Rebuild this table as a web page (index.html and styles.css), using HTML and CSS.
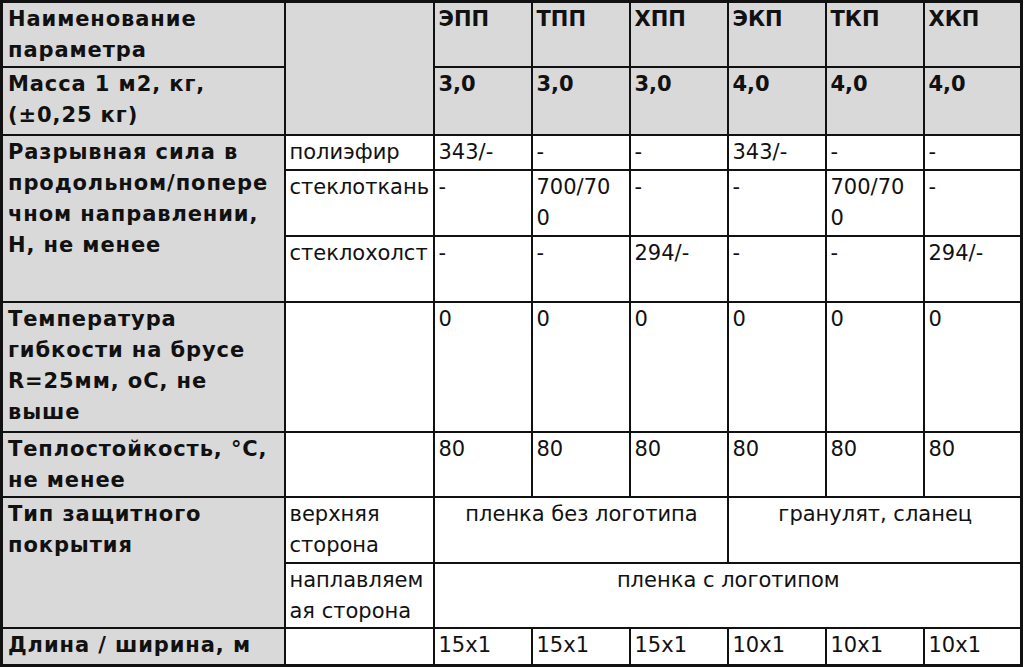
FILE: index.html
```html
<!DOCTYPE html>
<html lang="ru">
<head>
<meta charset="utf-8">
<link rel="stylesheet" href="styles.css">
</head>
<body>
<table class="spec">
  <colgroup>
    <col class="c-name">
    <col class="c-sub">
    <col class="c-val"><col class="c-val"><col class="c-val">
    <col class="c-val"><col class="c-val"><col class="c-val">
  </colgroup>
  <tbody>
    <tr class="r-head">
      <td class="name">Наименование параметра</td>
      <td class="gray" rowspan="2"></td>
      <td class="gray bold">ЭПП</td>
      <td class="gray bold">ТПП</td>
      <td class="gray bold">ХПП</td>
      <td class="gray bold">ЭКП</td>
      <td class="gray bold">ТКП</td>
      <td class="gray bold">ХКП</td>
    </tr>
    <tr class="r-mass">
      <td class="name">Масса 1 м2, кг, (±0,25 кг)</td>
      <td class="gray bold">3,0</td>
      <td class="gray bold">3,0</td>
      <td class="gray bold">3,0</td>
      <td class="gray bold">4,0</td>
      <td class="gray bold">4,0</td>
      <td class="gray bold">4,0</td>
    </tr>
    <tr class="r-poly">
      <td class="name" rowspan="3">Разрывная сила в продольном/&#8288;поперечном направлении, Н, не менее</td>
      <td>полиэфир</td>
      <td>343/-</td><td>-</td><td>-</td><td>343/-</td><td>-</td><td>-</td>
    </tr>
    <tr class="r-glass">
      <td>стеклоткань</td>
      <td>-</td><td>700/70<br>0</td><td>-</td><td>-</td><td>700/70<br>0</td><td>-</td>
    </tr>
    <tr class="r-holst">
      <td>стеклохолст</td>
      <td>-</td><td>-</td><td>294/-</td><td>-</td><td>-</td><td>294/-</td>
    </tr>
    <tr class="r-temp">
      <td class="name">Температура гибкости на брусе R=25мм, оС, не выше</td>
      <td></td>
      <td>0</td><td>0</td><td>0</td><td>0</td><td>0</td><td>0</td>
    </tr>
    <tr class="r-heat">
      <td class="name">Теплостойкость, °С, не менее</td>
      <td></td>
      <td>80</td><td>80</td><td>80</td><td>80</td><td>80</td><td>80</td>
    </tr>
    <tr class="r-top">
      <td class="name" rowspan="2">Тип защитного покрытия</td>
      <td>верхняя сторона</td>
      <td class="center" colspan="3">пленка без логотипа</td>
      <td class="center" colspan="3">гранулят, сланец</td>
    </tr>
    <tr class="r-bottom">
      <td>наплавляемая сторона</td>
      <td class="center" colspan="6">пленка с логотипом</td>
    </tr>
    <tr class="r-len">
      <td class="name">Длина / ширина, м</td>
      <td></td>
      <td>15x1</td><td>15x1</td><td>15x1</td><td>10x1</td><td>10x1</td><td>10x1</td>
    </tr>
  </tbody>
</table>
</body>
</html>
```

FILE: styles.css
```css
html, body {
  margin: 0;
  padding: 0;
  background: #ffffff;
}

.spec {
  border-collapse: collapse;
  table-layout: fixed;
  width: 1023px;
  font-family: "DejaVu Sans", "Liberation Sans", sans-serif;
  font-size: 21px;
  line-height: 31px;
  color: #111111;
  border: 3px solid #111111;
}

.c-name { width: 283px; }
.c-sub { width: 149px; }
.c-val { width: 98px; }

.spec td {
  border: 2px solid #111111;
  padding: 1px 2px 0 4px;
  vertical-align: top;
  overflow-wrap: anywhere;
}

.spec td.name {
  background: #d9d9d9;
  font-weight: bold;
  letter-spacing: 0.9px;
  padding-left: 5px;
}

.spec td.gray { background: #d9d9d9; }
.spec td.bold { font-weight: bold; }
.spec td.center { text-align: center; }

.r-head { height: 64px; }
.r-mass { height: 68px; }
.r-poly { height: 35px; }
.r-glass { height: 66px; }
.r-holst { height: 66px; }
.r-temp { height: 130px; }
.r-heat { height: 65px; }
.r-top { height: 66px; }
.r-bottom { height: 65px; }
.r-len { height: 37px; }
```
